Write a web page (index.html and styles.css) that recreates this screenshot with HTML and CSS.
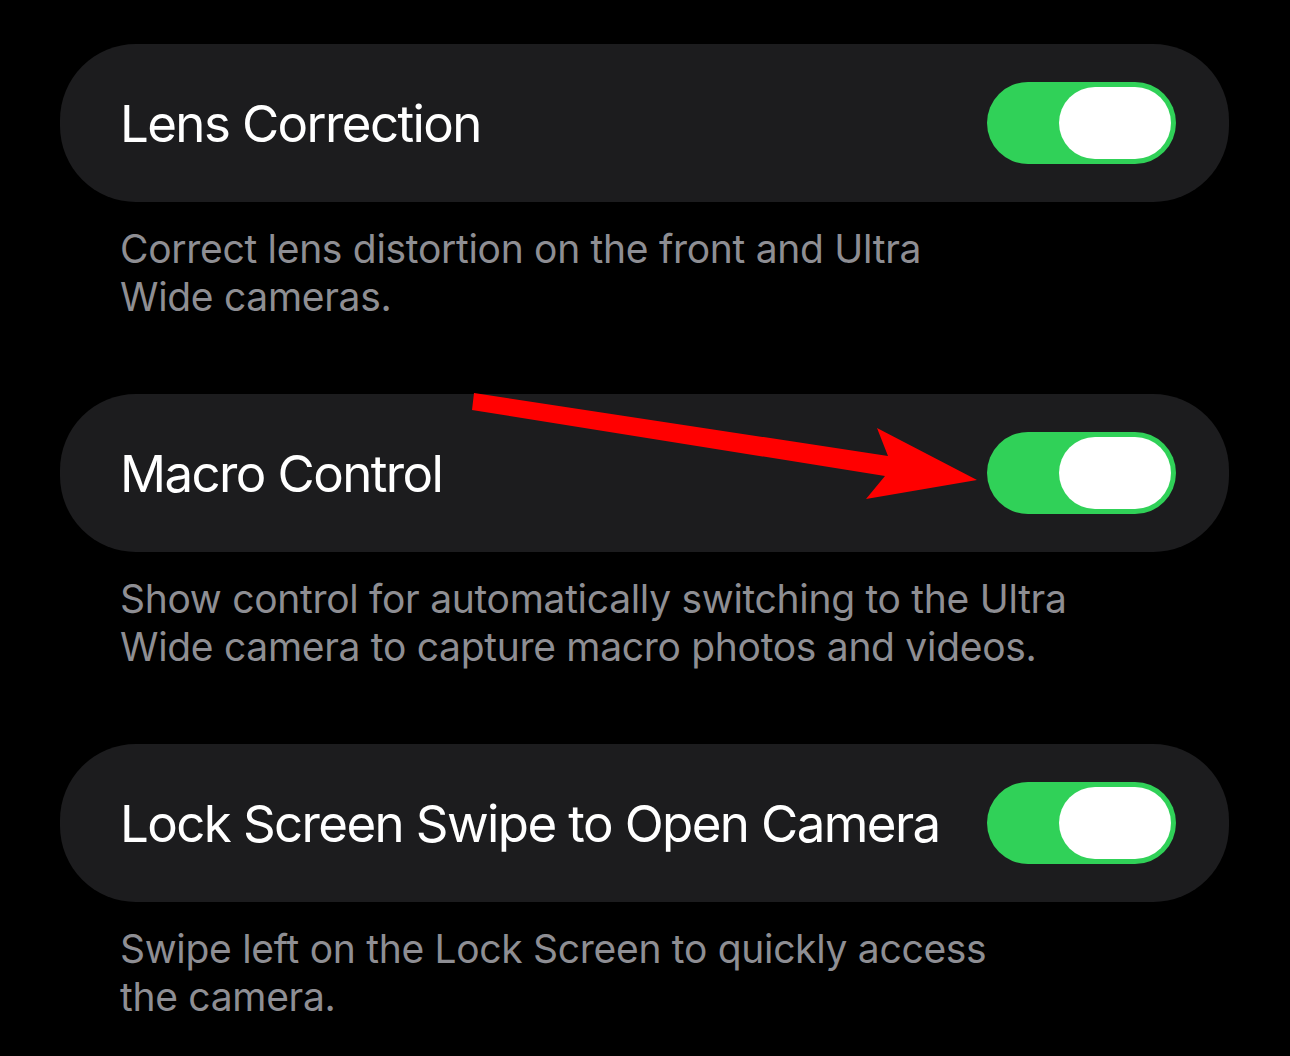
FILE: index.html
```html
<!DOCTYPE html>
<html lang="en">
<head>
<meta charset="utf-8">
<title>Camera Settings</title>
<link rel="stylesheet" href="styles.css">
</head>
<body>
<main class="page">
  <section class="group">
    <div class="cell">
      <span class="cell-title">Lens Correction</span>
      <span class="switch"><span class="knob"></span></span>
    </div>
    <p class="footer">Correct lens distortion on the front and Ultra<br>Wide cameras.</p>
  </section>
  <section class="group">
    <div class="cell">
      <span class="cell-title">Macro Control</span>
      <span class="switch"><span class="knob"></span></span>
    </div>
    <p class="footer">Show control for automatically switching to the Ultra<br>Wide camera to capture macro photos and videos.</p>
  </section>
  <section class="group">
    <div class="cell">
      <span class="cell-title">Lock Screen Swipe to Open Camera</span>
      <span class="switch"><span class="knob"></span></span>
    </div>
    <p class="footer">Swipe left on the Lock Screen to quickly access<br>the camera.</p>
  </section>
  <svg class="annotation" width="1290" height="1056" viewBox="0 0 1290 1056" aria-hidden="true">
    <polygon fill="#ff0000" points="474,393 888,456 877,428 977,480 866,499 885,476 472,410"/>
  </svg>
</main>
</body>
</html>
```
FILE: styles.css
```css
html, body {
  margin: 0;
  padding: 0;
  background: #000;
}
body {
  font-family: Inter, "Noto Sans", "Liberation Sans", sans-serif;
  -webkit-font-smoothing: antialiased;
}
.page {
  position: relative;
  width: 1290px;
  height: 1056px;
  overflow: hidden;
  box-sizing: border-box;
  padding: 44px 61px 0 60px;
  display: flex;
  flex-direction: column;
  gap: 73px;
}
.group {
  display: flex;
  flex-direction: column;
}
.cell {
  height: 158px;
  box-sizing: border-box;
  background: #1c1c1e;
  border-radius: 76px;
  display: flex;
  align-items: center;
  justify-content: space-between;
  padding: 0 53px 0 60px;
}
.cell-title {
  color: #fff;
  font-size: 51px;
  letter-spacing: -1.6px;
  line-height: 1;
}
.switch {
  width: 189px;
  height: 82px;
  border-radius: 41px;
  background: #30d158;
  display: flex;
  align-items: center;
  justify-content: flex-end;
  padding-right: 5px;
  box-sizing: border-box;
  flex-shrink: 0;
}
.knob {
  width: 112px;
  height: 72px;
  border-radius: 36px;
  background: #fff;
}
.footer {
  margin: 23px 0 0;
  padding-left: 60px;
  color: #8e8e93;
  font-size: 39px;
  line-height: 48px;
  letter-spacing: -0.3px;
}
.annotation {
  position: absolute;
  left: 0;
  top: 0;
  pointer-events: none;
}
```
